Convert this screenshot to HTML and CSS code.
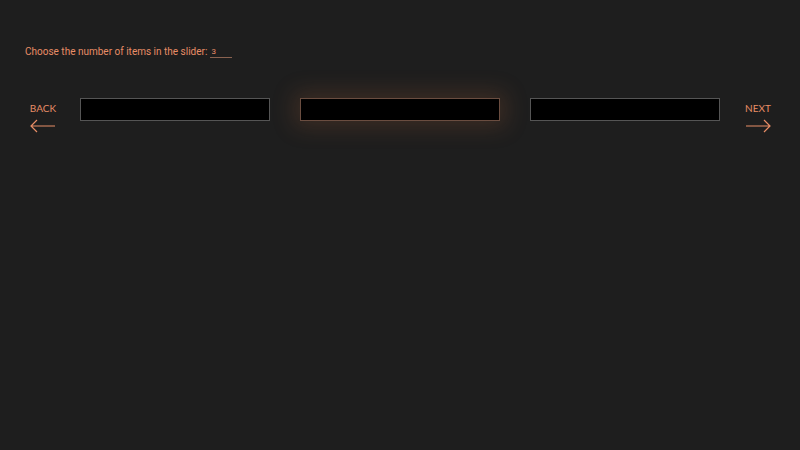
FILE: index.html
```html
<!DOCTYPE html>
<html>
<head>
<meta charset="utf-8">
<link rel="stylesheet" href="styles.css">
</head>
<body>
<div class="page">
  <div class="chooser">
    <label class="chooser-label">Choose the number of items in the slider:</label>
    <span class="chooser-input">3</span>
  </div>
  <div class="slider">
    <div class="nav nav-back">
      <span class="nav-text">BACK</span>
      <svg class="arrow" width="26" height="14" viewBox="0 0 26 14"><path d="M25 7H1M7 1L1 7L7 13" fill="none" stroke="#e88d66" stroke-width="1.2"/></svg>
    </div>
    <div class="item item-side"></div>
    <div class="item item-active"></div>
    <div class="item item-side"></div>
    <div class="nav nav-next">
      <span class="nav-text">NEXT</span>
      <svg class="arrow" width="26" height="14" viewBox="0 0 26 14"><path d="M1 7H25M19 1L25 7L19 13" fill="none" stroke="#e88d66" stroke-width="1.2"/></svg>
    </div>
  </div>
</div>
</body>
</html>
```
FILE: styles.css
```css
html, body {
  margin: 0;
  padding: 0;
  background: #1e1e1e;
  width: 800px;
  height: 450px;
  overflow: hidden;
  font-family: Roboto, "Liberation Sans", sans-serif;
  color: #e88d66;
}
.page {
  padding-top: 44px;
}
.chooser {
  display: flex;
  align-items: flex-end;
  padding-left: 25px;
  height: 14px;
}
.chooser-label {
  font-size: 10px;
  line-height: 14px;
  position: relative;
  top: 1px;
}
.chooser-input {
  margin-left: 3px;
  width: 22px;
  box-sizing: border-box;
  padding-left: 1px;
  font-size: 8px;
  line-height: 10px;
  border-bottom: 1px solid #8a6250;
}
.slider {
  display: flex;
  align-items: flex-start;
  margin-top: 40px;
  padding-left: 18px;
}
.nav {
  width: 50px;
  display: flex;
  flex-direction: column;
  align-items: center;
  margin-top: 4px;
}
.nav-back { margin-right: 12px; }
.nav-next { margin-left: 13px; }
.nav-text {
  font-family: Lato, "Liberation Sans", sans-serif;
  font-size: 10px;
  line-height: 12px;
}
.arrow {
  display: block;
  margin-top: 5px;
}
.item {
  height: 23px;
  box-sizing: border-box;
  background: #000;
  border: 1px solid #555;
}
.item-side { width: 190px; }
.item-active {
  width: 200px;
  margin: 0 30px;
  border-color: #6a4d40;
  box-shadow: 0 0 22px 6px rgba(170, 95, 55, 0.22);
}
```
